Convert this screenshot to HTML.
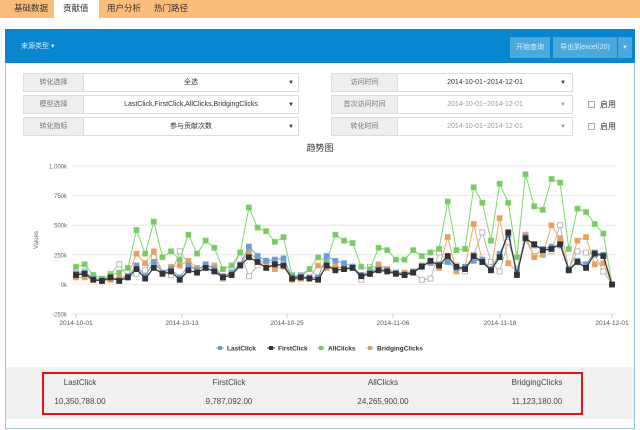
<!DOCTYPE html>
<html><head><meta charset="utf-8"><style>
*{margin:0;padding:0;box-sizing:border-box}
body{width:640px;height:430px;background:#fff;font-family:"Liberation Sans","Noto Sans CJK SC",sans-serif;position:relative;overflow:hidden;font-size:8px;color:#333}
.a{position:absolute}
.tabs{left:0;top:0;width:640px;height:18px;background:#fbbd7c}
.tab{top:0;height:18px;line-height:17px;font-size:8.5px;color:#333}
.panel{left:5px;top:29px;width:630px;height:400px;border:1px solid #9cc8e6;background:#fff}
.hdr{left:5px;top:29px;width:630px;height:34px;background:#0887d0}
.btn{background:#4aa8dd;color:#dff0fb;height:21px;line-height:21px;text-align:center;font-size:7px}
.lab{background:#eee;border:1px solid #ddd;color:#777;text-align:center;height:19px;line-height:17px;font-size:7px}
.inp{background:#fff;border:1px solid #ddd;text-align:center;height:19px;line-height:17px;font-size:7px;color:#333}
.car{font-size:6px;color:#333}
.grey{left:6px;top:367px;width:628px;height:52px;background:#f1f1f1}
.box{left:42px;top:372px;width:541px;height:43px;border:2px solid #e1141c}
.sv{font-size:8px;color:#444;text-align:center;width:100px}
</style></head><body>
<div class="a tabs"></div>
<div class="a tab" style="left:14px">基础数据</div>
<div class="a" style="left:54px;top:0;width:45px;height:18px;background:#fff"></div>
<div class="a tab" style="left:63px">贡献值</div>
<div class="a tab" style="left:107px">用户分析</div>
<div class="a tab" style="left:154px">热门路径</div>

<div class="a panel"></div>
<div class="a hdr"></div>
<div class="a" style="left:21px;top:41px;color:#d8ecfa;font-size:7px">来源类型 ▾</div>
<div class="a btn" style="left:510px;top:37px;width:40px">开始查询</div>
<div class="a btn" style="left:553px;top:37px;width:64px">导出到excel(20)</div>
<div class="a btn" style="left:618px;top:37px;width:14px">▾</div>

<div class="a lab" style="left:23px;top:73px;width:61px">转化选择</div>
<div class="a inp" style="left:83px;top:73px;width:216px">全选</div>
<div class="a lab" style="left:23px;top:95px;width:61px">模型选择</div>
<div class="a inp" style="left:83px;top:95px;width:216px">LastClick,FirstClick,AllClicks,BridgingClicks</div>
<div class="a lab" style="left:23px;top:117px;width:61px">转化指标</div>
<div class="a inp" style="left:83px;top:117px;width:216px">参与贡献次数</div>
<div class="a car" style="left:288px;top:80px">▼</div>
<div class="a car" style="left:288px;top:102px">▼</div>
<div class="a car" style="left:288px;top:124px">▼</div>

<div class="a lab" style="left:331px;top:73px;width:67px">访问时间</div>
<div class="a inp" style="left:397px;top:73px;width:176px">2014-10-01~2014-12-01</div>
<div class="a lab" style="left:331px;top:95px;width:67px">首次访问时间</div>
<div class="a inp" style="left:397px;top:95px;width:176px;color:#999">2014-10-01~2014-12-01</div>
<div class="a lab" style="left:331px;top:117px;width:67px">转化时间</div>
<div class="a inp" style="left:397px;top:117px;width:176px;color:#999">2014-10-01~2014-12-01</div>
<div class="a car" style="left:560px;top:80px">▼</div>
<div class="a car" style="left:560px;top:102px;color:#999">▼</div>
<div class="a car" style="left:560px;top:124px;color:#999">▼</div>
<div class="a" style="left:588px;top:101px;width:7px;height:7px;border:1px solid #aaa"></div>
<div class="a" style="left:600px;top:99px;font-size:8px">启用</div>
<div class="a" style="left:588px;top:123px;width:7px;height:7px;border:1px solid #aaa"></div>
<div class="a" style="left:600px;top:121px;font-size:8px">启用</div>

<svg class="a" style="left:0;top:0" width="640" height="430" id="ch"></svg>

<div class="a grey"></div>
<div class="a box"></div>
<div class="a sv" style="left:30px;top:378px">LastClick</div>
<div class="a sv" style="left:30px;top:397px">10,350,788.00</div>
<div class="a sv" style="left:179px;top:378px">FirstClick</div>
<div class="a sv" style="left:179px;top:397px">9,787,092.00</div>
<div class="a sv" style="left:333px;top:378px">AllClicks</div>
<div class="a sv" style="left:333px;top:397px">24,265,900.00</div>
<div class="a sv" style="left:487px;top:378px">BridgingClicks</div>
<div class="a sv" style="left:487px;top:397px">11,123,180.00</div>

<script>
var s=document.getElementById('ch'),h='';
h+='<text x="320" y="151" font-size="9" fill="#333" text-anchor="middle" font-family="Liberation Sans,Noto Sans CJK SC,sans-serif">趋势图</text>';
var yl=['1,000k','750k','500k','250k','0k','-250k'];
for(var i=0;i<6;i++){var y=166+i*29.6;h+='<line x1="72" x2="616" y1="'+y+'" y2="'+y+'" stroke="#e3e3e3" stroke-width="0.8"/>';h+='<text x="67" y="'+(y+2.5)+'" font-size="6" fill="#666" text-anchor="end" font-family="Liberation Sans">'+yl[i]+'</text>';}
h+='<text x="38" y="240" font-size="6" fill="#666" transform="rotate(-90 38 240)" text-anchor="middle" font-family="Liberation Sans">Values</text>';
var xl=['2014-10-01','2014-10-13','2014-10-25','2014-11-06','2014-11-18','2014-12-01'];
var xp=[76,182,287,393,500,612];
for(i=0;i<6;i++){h+='<line x1="'+xp[i]+'" x2="'+xp[i]+'" y1="314" y2="318" stroke="#ccc"/>';h+='<text x="'+xp[i]+'" y="325" font-size="6.5" fill="#555" text-anchor="middle" font-family="Liberation Sans">'+xl[i]+'</text>';}
var G=[150,170,80,50,80,100,140,460,260,530,230,280,210,420,260,370,310,130,160,270,650,480,450,360,400,80,60,130,230,200,420,370,350,150,130,310,290,210,210,290,240,270,300,700,290,300,820,690,370,850,690,230,930,660,630,890,860,300,640,610,510,430,0];
var O=[60,60,40,30,40,60,70,260,180,280,100,150,160,200,140,150,160,60,100,160,280,200,190,130,150,40,50,60,160,140,150,140,140,80,90,170,130,100,100,110,160,180,140,400,110,140,510,200,120,560,180,110,420,230,250,500,390,120,370,400,170,180,0];
var B=[80,90,40,30,60,30,60,130,50,140,90,110,40,120,100,140,110,60,80,160,230,190,140,170,160,50,60,50,40,160,120,130,140,70,90,120,110,90,80,100,150,200,160,240,150,130,240,190,120,230,440,80,390,340,290,300,340,120,190,140,260,240,0];
var L=[90,100,50,40,60,40,70,160,70,190,100,130,60,160,120,170,130,70,100,170,320,240,200,210,220,60,70,60,60,240,200,180,150,80,100,130,120,100,90,110,160,190,170,190,140,150,200,210,130,260,420,100,400,330,300,320,330,130,200,170,270,250,0];
var W=[100,110,50,40,90,170,60,90,120,230,100,80,280,180,120,160,140,50,120,270,70,160,200,170,170,70,80,130,60,150,150,140,150,40,150,150,130,100,80,100,40,50,270,200,160,110,250,440,190,110,360,130,380,240,300,280,500,130,280,270,250,110,0];
function P(d,c,fill,sw){var n=d.length,pts='',m='';for(var k=0;k<n;k++){var x=76+k*(612-76)/(n-1),y=284.5-d[k]*0.1185;pts+=x.toFixed(1)+','+y.toFixed(1)+' ';m+='<rect x="'+(x-2.5)+'" y="'+(y-2.5)+'" width="5" height="5" fill="'+fill+'" stroke="'+c+'" stroke-width="0.8"/>';}
h+='<polyline points="'+pts+'" fill="none" stroke="'+c+'" stroke-width="'+sw+'"/>'+m;}
P(W,'#aaa','#fff',0.8);P(G,'#7ed76b','#7bc56a',1);P(O,'#f0a860','#e0a06a',1);P(L,'#6fa0d8','#6a9bd6',1);P(B,'#333','#333',1.2);
var lg=[['LastClick','#6a9bd6',225],['FirstClick','#333',276],['AllClicks','#7bc56a',326],['BridgingClicks','#e0a06a',375]];
for(i=0;i<4;i++){h+='<line x1="'+(lg[i][2]-9)+'" x2="'+(lg[i][2]-1)+'" y1="348" y2="348" stroke="'+lg[i][1]+'"/><rect x="'+(lg[i][2]-7)+'" y="346" width="4" height="4" fill="'+lg[i][1]+'"/><text x="'+(lg[i][2]+2)+'" y="350.5" font-size="6.5" font-weight="bold" fill="#333" font-family="Liberation Sans">'+lg[i][0]+'</text>';}
s.innerHTML=h;
</script>
</body></html>
